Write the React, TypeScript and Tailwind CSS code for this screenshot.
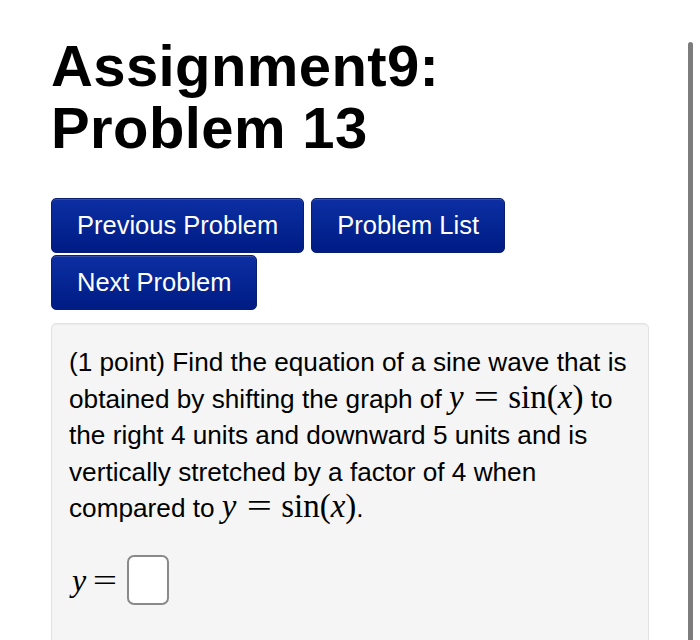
const Eq = ({ gap = "mx-[13px]" }: { gap?: string }) => (
  <span className={`${gap} inline-block scale-x-[1.35]`}>=</span>
);

const MathSin = () => (
  <span className="font-['Liberation_Serif',serif] text-[33px] leading-none">
    <i>y</i>
    <Eq />
    sin(<i>x</i>)
  </span>
);

const NavButton = ({ label }: { label: string }) => (
  <button className="h-[55px] rounded-[5px] border border-[#0a1f6e] bg-gradient-to-b from-[#0d2fa3] to-[#001b84] px-[25px] text-[25.5px] text-white shadow-[inset_0_1px_0_rgba(255,255,255,0.15)]">
    {label}
  </button>
);

export default function App() {
  return (
    <div className="relative h-[640px] w-[700px] overflow-hidden bg-white font-['Liberation_Sans',Arial,sans-serif] text-black">
      <div className="pl-[51px] pr-[51px] pt-[35px]">
        <h1 className="text-[58px] font-bold leading-[62px] tracking-[0.4px]">
          Assignment9:
          <br />
          Problem 13
        </h1>

        <div className="mt-[39px] flex w-[470px] flex-wrap gap-x-[7px] gap-y-[2px]">
          <NavButton label="Previous Problem" />
          <NavButton label="Problem List" />
          <NavButton label="Next Problem" />
        </div>

        <div className="mt-[13px] h-[340px] w-[598px] rounded-[5px] border border-[#e3e3e3] bg-[#f5f5f5] px-[17px] pt-[20px] shadow-[inset_0_1px_1px_rgba(0,0,0,0.04)]">
          <p className="text-[26.2px] leading-[36.5px]">
            (1 point) Find the equation of a sine wave that is
            <br />
            obtained by shifting the graph of <MathSin /> to
            <br />
            the right 4 units and downward 5 units and is
            <br />
            vertically stretched by a factor of 4 when
            <br />
            compared to <MathSin />.
          </p>

          <div className="mt-[28px] flex items-center pl-[3px]">
            <span className="font-['Liberation_Serif',serif] text-[32px]">
              <i>y</i>
              <Eq gap="ml-[10px] mr-[13px]" />
            </span>
            <div className="h-[50px] w-[42px] rounded-[7px] border-2 border-[#8a8a8a] bg-white" />
          </div>
        </div>
      </div>

      <div className="absolute right-[7px] top-[42px] h-[600px] w-[5px] rounded-full bg-[#7d7d7d]" />
    </div>
  );
}
